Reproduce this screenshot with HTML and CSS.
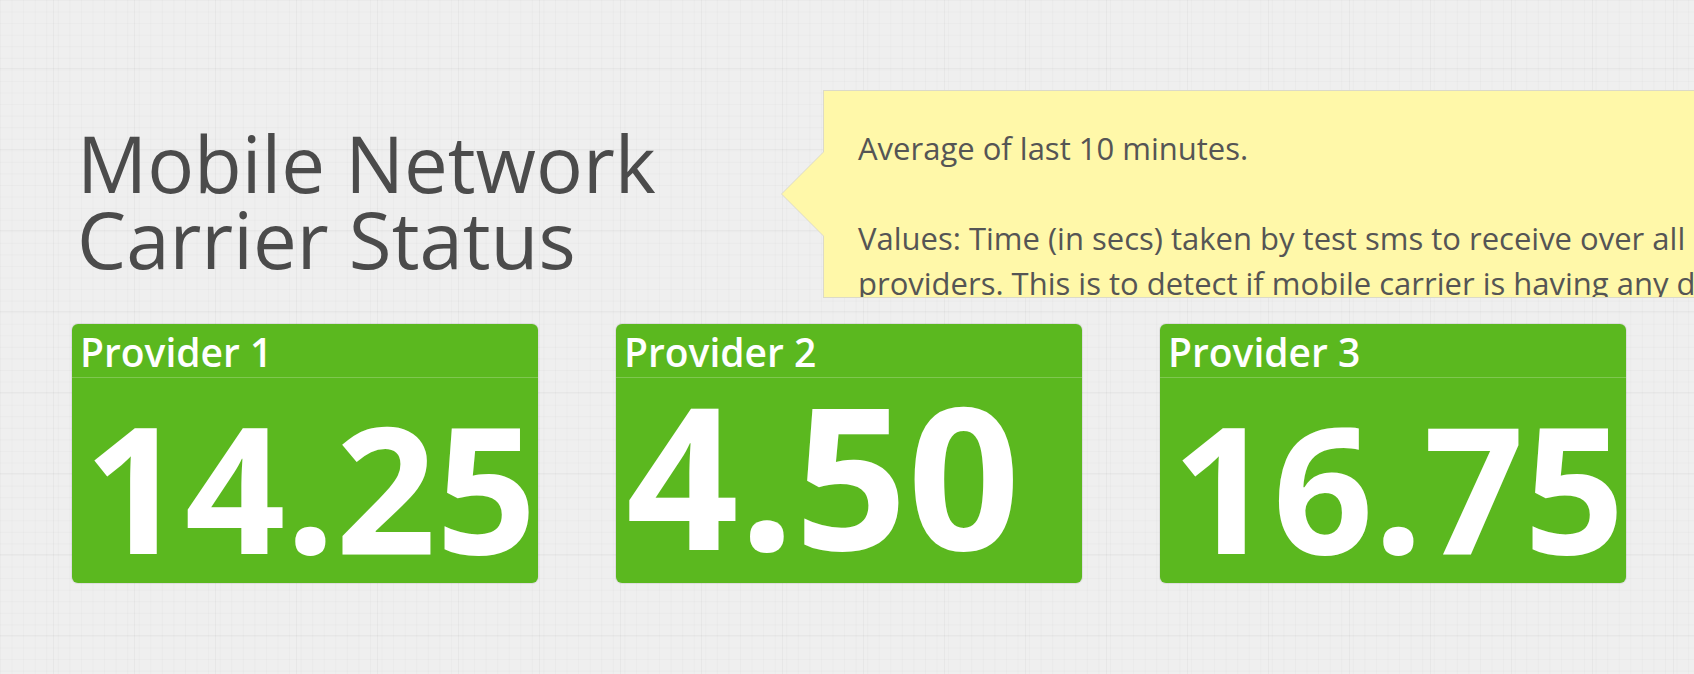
FILE: index.html
```html
<!DOCTYPE html>
<html lang="en">

<head>
    <meta charset="UTF-8">
    <meta name="viewport" content="width=device-width, initial-scale=1.0">
    <title>Mobile Network Carrier Status</title>
    <link rel="stylesheet" href="styles.css">
</head>

<body>
    <div class="dashboard">
        <h1 class="title">Mobile Network<br>Carrier Status</h1>

        <!-- info note next to the title -->
        <div class="note">
            <div class="note-body">
                <p>Average of last 10 minutes.</p>
                <p>Values: Time (in secs) taken by test sms to receive over all providers. This is to detect if mobile carrier is having any delay in delivering messages.</p>
            </div>
        </div>

        <ul class="widgets">
            <li class="widget">
                <h2 class="widget-title">Provider 1</h2>
                <div class="widget-value">14.25</div>
            </li>
            <li class="widget">
                <h2 class="widget-title">Provider 2</h2>
                <div class="widget-value widget-value--short">4.50</div>
            </li>
            <li class="widget">
                <h2 class="widget-title">Provider 3</h2>
                <div class="widget-value">16.75</div>
            </li>
        </ul>
    </div>
</body>

</html>
```

FILE: styles.css
```css
html,
body {
    overflow: hidden;
}

body {
    margin: 0;
    font-family: "Open Sans", "Noto Sans", Arial, sans-serif;
    color: #4a4a4a;
    background-color: #efefef;
    /* graph paper: big squares + small squares */
    background-image:
        linear-gradient(rgba(0, 0, 0, 0.035) 1px, transparent 1px),
        linear-gradient(90deg, rgba(0, 0, 0, 0.035) 1px, transparent 1px),
        linear-gradient(rgba(0, 0, 0, 0.02) 1px, transparent 1px),
        linear-gradient(90deg, rgba(0, 0, 0, 0.02) 1px, transparent 1px);
    background-size: 81px 81px, 81px 81px, 11.57px 11.57px, 11.57px 11.57px;
    background-position: 53px 68px, 53px 68px, 0 0, 0 0;
}

.dashboard {
    position: relative;
    min-height: 100vh;
    padding: 125px 0 0 72px;
    box-sizing: border-box;
}

/* Title */
.title {
    margin: 0;
    padding-left: 5px;
    font-size: 78px;
    font-weight: 400;
    line-height: 76px;
    color: #4b4b4b;
}

/* Yellow note */
.note {
    position: absolute;
    top: 90px;
    left: 823px;
    width: 990px;
    background-color: #fff8a9;
    border: 1px solid #dcdac8;
}

.note::before,
.note::after {
    content: "";
    position: absolute;
    top: 50%;
    right: 100%;
    border-style: solid;
    border-color: transparent;
}

.note::before {
    margin-top: -43px;
    border-width: 43px 43px 43px 0;
    border-right-color: #dcdac8;
}

.note::after {
    margin-top: -42px;
    border-width: 42px 42px 42px 0;
    border-right-color: #fff8a9;
}

.note-body {
    height: 206px;
    box-sizing: border-box;
    padding: 35px 40px 0 34px;
    overflow: hidden;
    font-size: 31px;
    line-height: 45px;
    color: #555;
}

.note-body p {
    margin: 0 0 45px;
}

/* Provider widgets */
.widgets {
    display: flex;
    gap: 78px;
    margin: 47px 0 0;
    padding: 0;
    list-style: none;
}

.widget {
    width: 466px;
    height: 259px;
    background-color: #5bb81f;
    border-radius: 6px;
    box-shadow: 0 0 0 1px rgba(0, 0, 0, 0.07);
    overflow: hidden;
    color: #fff;
}

.widget-title {
    margin: 0;
    padding: 3px 8px 0;
    font-size: 39px;
    font-weight: 600;
    line-height: 50px;
    border-bottom: 1px solid rgba(255, 255, 255, 0.22);
}

.widget-value {
    padding: 18px 10px 0 12px;
    font-size: 176px;
    font-weight: 700;
    line-height: 180px;
    white-space: nowrap;
}

/* fewer digits -> the value is drawn bigger */
.widget-value--short {
    padding-left: 10px;
    font-size: 197px;
    line-height: 156px;
}
```
